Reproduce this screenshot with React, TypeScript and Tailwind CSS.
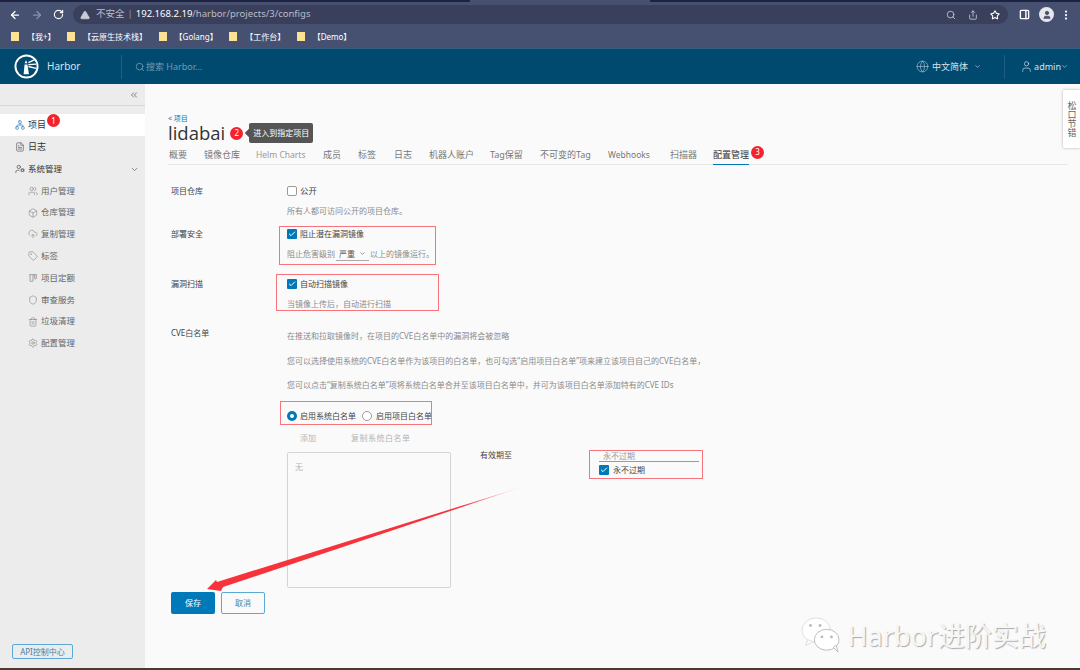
import type { ReactNode } from "react";
import {
  ArrowLeft,
  ArrowRight,
  Box,
  Check,
  ChevronDown,
  ChevronsLeft,
  CloudUpload,
  EllipsisVertical,
  FileText,
  Globe,
  Network,
  PanelRight,
  RotateCw,
  Search,
  Settings,
  Share,
  Shield,
  Star,
  Tag,
  Trash2,
  TriangleAlert,
  User,
  UserCog,
  Users,
} from "lucide-react";

const bookmarks = ["【我+】", "【云原生技术栈】", "【Golang】", "【工作台】", "【Demo】"];

function QuotaIcon({ className }: { className?: string }) {
  return (
    <svg viewBox="0 0 24 24" fill="none" stroke="currentColor" strokeWidth="1.8" className={className}>
      <path d="M3 4h18M5 4v15a1 1 0 0 0 1 1h5a1 1 0 0 0 1-1V4M16 4v9a1 1 0 0 0 1 1h2a1 1 0 0 0 1-1V4" />
    </svg>
  );
}

const adminItems = [
  { label: "用户管理", icon: Users },
  { label: "仓库管理", icon: Box },
  { label: "复制管理", icon: CloudUpload },
  { label: "标签", icon: Tag },
  { label: "项目定额", icon: QuotaIcon },
  { label: "审查服务", icon: Shield },
  { label: "垃圾清理", icon: Trash2 },
  { label: "配置管理", icon: Settings },
];

const tabs = [
  { label: "概要", w: "w-[35px]" },
  { label: "镜像仓库", w: "w-[52px]" },
  { label: "Helm Charts", w: "w-[67px] text-[8.5px] text-[#999]" },
  { label: "成员", w: "w-[35px]" },
  { label: "标签", w: "w-[36px]" },
  { label: "日志", w: "w-[35px]" },
  { label: "机器人账户", w: "w-[61px]" },
  { label: "Tag保留", w: "w-[50px]" },
  { label: "不可变的Tag", w: "w-[68px]" },
  { label: "Webhooks", w: "w-[62px] text-[8.5px]" },
  { label: "扫描器", w: "w-[43px]" },
];

function Badge({ n }: { n: number }) {
  return (
    <span className="flex h-[13px] w-[13px] items-center justify-center rounded-full bg-[#f5222d] text-[8px] leading-none text-white">
      {n}
    </span>
  );
}

function Checkbox({ checked }: { checked?: boolean }) {
  return checked ? (
    <span className="flex h-[10px] w-[10px] shrink-0 items-center justify-center rounded-[1px] bg-[#0079b8]">
      <Check className="h-[8px] w-[8px] text-white" strokeWidth={3} />
    </span>
  ) : (
    <span className="h-[10px] w-[10px] shrink-0 rounded-[2px] border border-[#9a9a9a] bg-white" />
  );
}

function Row({ label, children, className }: { label: string; children: ReactNode; className: string }) {
  return (
    <div className={`ml-[3px] flex ${className}`}>
      <div className="w-[116px] shrink-0 text-[8px] leading-[14px] text-[#444]">{label}</div>
      <div className="flex-1">{children}</div>
    </div>
  );
}

function RedBox({ className }: { className: string }) {
  return <div className={`pointer-events-none absolute border border-[#f8747a] ${className}`} />;
}

function BrowserBar() {
  return (
    <div className="h-[48px] shrink-0 bg-[#465172]">
      <div className="flex h-[2px] justify-between">
        <div className="w-[470px] bg-[#1d2340]" />
        <div className="w-[430px] bg-[#1d2340]" />
      </div>
      <div className="flex h-[25px] items-center pl-[9px] pr-[8px]">
        <ArrowLeft className="h-[12px] w-[12px] text-white" strokeWidth={2.5} />
        <ArrowRight className="ml-[10px] h-[12px] w-[12px] text-[#8891aa]" strokeWidth={2.5} />
        <RotateCw className="ml-[10px] h-[11px] w-[11px] text-white" strokeWidth={2.5} />
        <div className="ml-[9px] flex h-[19px] flex-1 items-center rounded-full bg-[#3a405c] pl-[7px] pr-[8px] text-[9.5px] text-[#b9bdca]">
          <TriangleAlert className="h-[10px] w-[10px] fill-[#c9ccd6] text-[#c9ccd6]" />
          <span className="ml-[6px] text-[9.5px]">不安全</span>
          <span className="mx-[3px] text-[#8f94a8]">|</span>
          <span className="text-white">192.168.2.19</span>
          <span>/harbor/projects/3/configs</span>
          <div className="ml-auto flex items-center gap-[12px] text-[#c9ccd6]">
            <Search className="h-[10px] w-[10px]" />
            <Share className="h-[10px] w-[10px]" />
            <Star className="h-[10px] w-[10px] text-white" strokeWidth={2.5} />
          </div>
        </div>
        <PanelRight className="ml-[11px] h-[11px] w-[11px] text-white" strokeWidth={3} />
        <span className="ml-[9px] flex h-[15px] w-[15px] items-center justify-center rounded-full bg-[#e8e8ec]">
          <User className="h-[10px] w-[10px] fill-[#465172] text-[#465172]" />
        </span>
        <EllipsisVertical className="ml-[6px] h-[12px] w-[12px] text-white" strokeWidth={2.5} />
      </div>
      <div className="flex h-[19px] items-center pl-[11px] text-[8px] text-white">
        {bookmarks.map((b) => (
          <span key={b} className="mr-[11.5px] flex items-center gap-[8px]">
            <span className="h-[9px] w-[8px] bg-[#fde293]" />
            {b}
          </span>
        ))}
      </div>
    </div>
  );
}

function Header() {
  return (
    <div className="flex h-[36px] shrink-0 items-center border-t border-[#30607f] bg-[#004a70] text-[9px] text-[#d8e3ea]">
      <div className="flex w-[121px] items-center pl-[14px]">
        <svg viewBox="0 0 26 26" className="h-[25px] w-[25px]">
          <circle cx="13" cy="13" r="11.5" fill="#004a70" stroke="#fff" strokeWidth="2" />
          <path d="M10 21 L11 11 H14 L15.5 21 Z M11 9.5 L12.5 6.5 L14 9.5 Z" fill="#fff" />
          <path d="M15 9 L22 5.5 M15 11 L23 10.5 M15 13 L23 15" stroke="#fff" strokeWidth="1.4" />
        </svg>
        <span className="ml-[8px] text-[10px]">Harbor</span>
      </div>
      <div className="flex h-[24px] items-center gap-[1px] border-l border-[#1e5f82] pl-[13px] text-[#6f9bb4]">
        <Search className="h-[10px] w-[10px]" />
        <span>搜索 Harbor...</span>
      </div>
      <div className="ml-auto flex items-center gap-[3px]">
        <Globe className="h-[13px] w-[13px] text-[#a9c3d2]" strokeWidth={1.2} />
        <span>中文简体</span>
        <ChevronDown className="ml-[3px] h-[7px] w-[7px]" />
      </div>
      <div className="ml-[23px] flex h-[24px] items-center border-l border-[#1e5f82] pl-[15px] pr-[12px]">
        <User className="h-[13px] w-[13px]" strokeWidth={1.2} />
        <span className="ml-[1px]">admin</span>
        <ChevronDown className="h-[7px] w-[7px]" />
      </div>
    </div>
  );
}

function Sidebar() {
  return (
    <aside className="flex w-[145px] shrink-0 flex-col bg-[#ececec] text-[8.5px] text-[#555]">
      <div className="flex h-[22px] items-center justify-end border-b border-[#d8d8d8] pr-[6px]">
        <ChevronsLeft className="h-[10px] w-[10px] text-[#666]" />
      </div>
      <div className="relative mt-[8px] flex h-[22px] items-center bg-white pl-[15px] text-[9px] text-[#333]">
        <Network className="h-[10px] w-[10px] text-[#4a90c2]" />
        <span className="ml-[3px]">项目</span>
        <span className="absolute left-[47px] top-[0px]">
          <Badge n={1} />
        </span>
      </div>
      <div className="flex h-[22px] items-center pl-[15px] text-[9px] text-[#333]">
        <FileText className="h-[10px] w-[10px] text-[#777]" />
        <span className="ml-[3px]">日志</span>
      </div>
      <div className="flex h-[22px] items-center pl-[15px] pr-[6px] text-[#333]">
        <UserCog className="h-[10px] w-[10px] text-[#666]" />
        <span className="ml-[3px]">系统管理</span>
        <ChevronDown className="ml-auto h-[9px] w-[9px] text-[#666]" />
      </div>
      {adminItems.map(({ label, icon: Icon }) => (
        <div key={label} className="flex h-[21.8px] items-center pl-[28px] text-[#666]">
          <Icon className="h-[10px] w-[10px] text-[#888]" strokeWidth={1.5} />
          <span className="ml-[3px]">{label}</span>
        </div>
      ))}
      <div className="mt-auto mb-[9px] ml-[12px] flex h-[15px] w-[61px] items-center justify-center rounded-[2px] border border-[#5aa9d6] text-[8px] text-[#4a7fa3]">
        API控制中心
      </div>
    </aside>
  );
}

function Main() {
  return (
    <main className="relative flex-1 bg-[#fafafa] pl-[23px] pr-[12px] pt-[30px]">
      <div className="text-[7px] leading-[9px] text-[#0079b8]">&lt; 项目</div>
      <div className="flex h-[20px] items-center">
        <span className="font-['Open_Sans',sans-serif] text-[18.5px] leading-[20px] text-[#333]">lidabai</span>
        <span className="ml-[5px]">
          <Badge n={2} />
        </span>
        <span className="relative ml-[6px] flex h-[20px] w-[64px] items-center justify-center rounded-[2px] bg-[#555] text-[8px] text-white">
          <span className="absolute -left-[3px] top-[7px] h-[6px] w-[6px] rotate-45 bg-[#555]" />
          <span className="relative">进入到指定项目</span>
        </span>
      </div>
      <div className="mt-[2px] flex h-[20px] items-center border-b border-[#e6e6e6] pl-[1px] text-[9px] leading-[20px] text-[#777]">
        {tabs.map((t) => (
          <span key={t.label} className={`${t.w} shrink-0 whitespace-nowrap leading-[20px]`}>
            {t.label}
          </span>
        ))}
        <span className="relative block h-[20px] border-b-[1.5px] border-[#0079b8] leading-[20px] text-[#333]">
          配置管理
          <span className="absolute -right-[15px] top-[1px]">
            <Badge n={3} />
          </span>
        </span>
      </div>

      <Row label="项目仓库" className="mt-[19px]">
        <div className="flex h-[14px] items-center gap-[3px] text-[8.5px] text-[#444]">
          <Checkbox />
          公开
        </div>
        <p className="mt-[6px] text-[8px] leading-[14px] text-[#8a8a8a]">所有人都可访问公开的项目仓库。</p>
      </Row>
      <Row label="部署安全" className="mt-[9px]">
        <div className="flex h-[14px] items-center gap-[3px] text-[8px] text-[#444]">
          <Checkbox checked />
          阻止潜在漏洞镜像
        </div>
        <div className="mt-[6px] flex h-[14px] items-center text-[8px] text-[#8a8a8a]">
          阻止危害级别
          <span className="mx-[1px] flex w-[33px] items-center border-b border-[#aaa] pl-[3px] text-[#555]">
            严重
            <ChevronDown className="ml-[4px] h-[7px] w-[7px]" />
          </span>
          以上的镜像运行。
        </div>
      </Row>
      <Row label="漏洞扫描" className="mt-[16px]">
        <div className="flex h-[14px] items-center gap-[3px] text-[8px] text-[#444]">
          <Checkbox checked />
          自动扫描镜像
        </div>
        <p className="mt-[6px] text-[8px] leading-[14px] text-[#8a8a8a]">当镜像上传后，自动进行扫描</p>
      </Row>
      <Row label="CVE白名单" className="mt-[15px]">
        <div className="mt-[3px] flex flex-col gap-[10.5px] text-[8px] leading-[14px] text-[#8a8a8a]">
          <p>在推送和拉取镜像时，在项目的CVE白名单中的漏洞将会被忽略</p>
          <p>您可以选择使用系统的CVE白名单作为该项目的白名单，也可勾选“启用项目白名单”项来建立该项目自己的CVE白名单，</p>
          <p>您可以点击“复制系统白名单”项将系统白名单合并至该项目白名单中，并可为该项目白名单添加特有的CVE IDs</p>
        </div>
        <div className="mt-[17px] flex h-[14px] items-center text-[8px] text-[#444]">
          <span className="flex h-[10px] w-[10px] items-center justify-center rounded-full bg-[#0079b8]">
            <span className="h-[4px] w-[4px] rounded-full bg-white" />
          </span>
          <span className="ml-[3px]">启用系统白名单</span>
          <span className="ml-[6px] h-[10px] w-[10px] rounded-full border border-[#9a9a9a] bg-white" />
          <span className="ml-[4px]">启用项目白名单</span>
        </div>
        <div className="mt-[8px] flex h-[14px] items-center pl-[13px] text-[8px] text-[#b5b5b5]">
          <span>添加</span>
          <span className="ml-[35px] tracking-[0.5px]">复制系统白名单</span>
        </div>
        <div className="mt-[7px] flex">
          <div className="h-[136px] w-[164px] rounded-[2px] border border-[#d4d4d4] pl-[7px] pt-[8px] text-[8px] text-[#b5b5b5]">
            无
          </div>
          <div className="ml-[29px] -mt-[2px] text-[8px] leading-[10px] text-[#444]">有效期至</div>
          <div className="ml-[87px] w-[100px]">
            <div className="h-[10px] border-b border-[#9a9a9a] pl-[4px] text-[8px] leading-[7px] text-[#999]">永不过期</div>
            <div className="mt-[2px] flex items-center gap-[4px] text-[8px] leading-[12px] text-[#444]">
              <Checkbox checked />
              永不过期
            </div>
          </div>
        </div>
      </Row>
      <div className="ml-[3px] mt-[4px] flex gap-[6px] text-[8px]">
        <button className="h-[22px] w-[44px] rounded-[2px] bg-[#0079b8] text-white">保存</button>
        <button className="h-[22px] w-[44px] rounded-[2px] border border-[#5aa9d6] text-[#4a7fa3]">取消</button>
      </div>

      {/* annotations pasted over the page */}
      <RedBox className="left-[134px] top-[142px] h-[39px] w-[157px]" />
      <RedBox className="left-[131px] top-[190px] h-[37px] w-[163px]" />
      <RedBox className="left-[135px] top-[317px] h-[24px] w-[152px]" />
      <RedBox className="left-[444px] top-[366px] h-[29px] w-[114px]" />
      <svg viewBox="0 0 400 200" className="pointer-events-none absolute left-[45px] top-[398px] h-[200px] w-[400px]">
        <defs>
          <linearGradient id="arrowFade" x1="0" y1="1" x2="1" y2="0">
            <stop offset="0.8" stopColor="#f7323a" />
            <stop offset="1" stopColor="#f7323a" stopOpacity="0" />
          </linearGradient>
        </defs>
        <path d="M17 107 L26 98 L27 100 L335 4 L33 105 L31 109 Z" fill="url(#arrowFade)" />
      </svg>

      <div className="absolute right-0 top-[6px] flex h-[58px] w-[17px] items-center justify-center rounded-l-[1px] bg-white text-[9px] leading-[10px] text-[#666] shadow-[0_0_3px_rgba(0,0,0,0.3)] [writing-mode:vertical-rl] [text-orientation:upright]">
        松口节错
      </div>

      <div className="absolute bottom-[14px] right-[34px] flex items-center gap-[6px]">
        <svg viewBox="0 0 44 40" className="h-[38px] w-[42px]">
          <ellipse cx="17" cy="15" rx="15" ry="13" fill="#fff" stroke="#ddd" />
          <path d="M8 25 L6 31 L14 27 Z" fill="#fff" stroke="#ddd" />
          <ellipse cx="28" cy="25" rx="13" ry="11" fill="#fff" stroke="#bbb" />
          <path d="M35 33 L40 38 L38 31 Z" fill="#fff" stroke="#bbb" />
          <circle cx="11" cy="10" r="1.5" fill="#bbb" />
          <circle cx="21" cy="10" r="1.5" fill="#bbb" />
          <circle cx="23" cy="22" r="1.5" fill="#bbb" />
          <circle cx="33" cy="22" r="1.5" fill="#bbb" />
        </svg>
        <span className="text-[27px] leading-none text-[#f7f7f7] [text-shadow:1px_1px_1px_#aaa]">Harbor进阶实战</span>
      </div>
    </main>
  );
}

export default function App() {
  return (
    <div className="flex h-[670px] w-[1080px] flex-col overflow-hidden font-['Noto_Sans','Noto_Sans_CJK_SC',sans-serif]">
      <BrowserBar />
      <Header />
      <div className="flex min-h-0 flex-1">
        <Sidebar />
        <Main />
      </div>
      <div className="h-[2px] shrink-0 bg-[#4a3a30]" />
    </div>
  );
}
